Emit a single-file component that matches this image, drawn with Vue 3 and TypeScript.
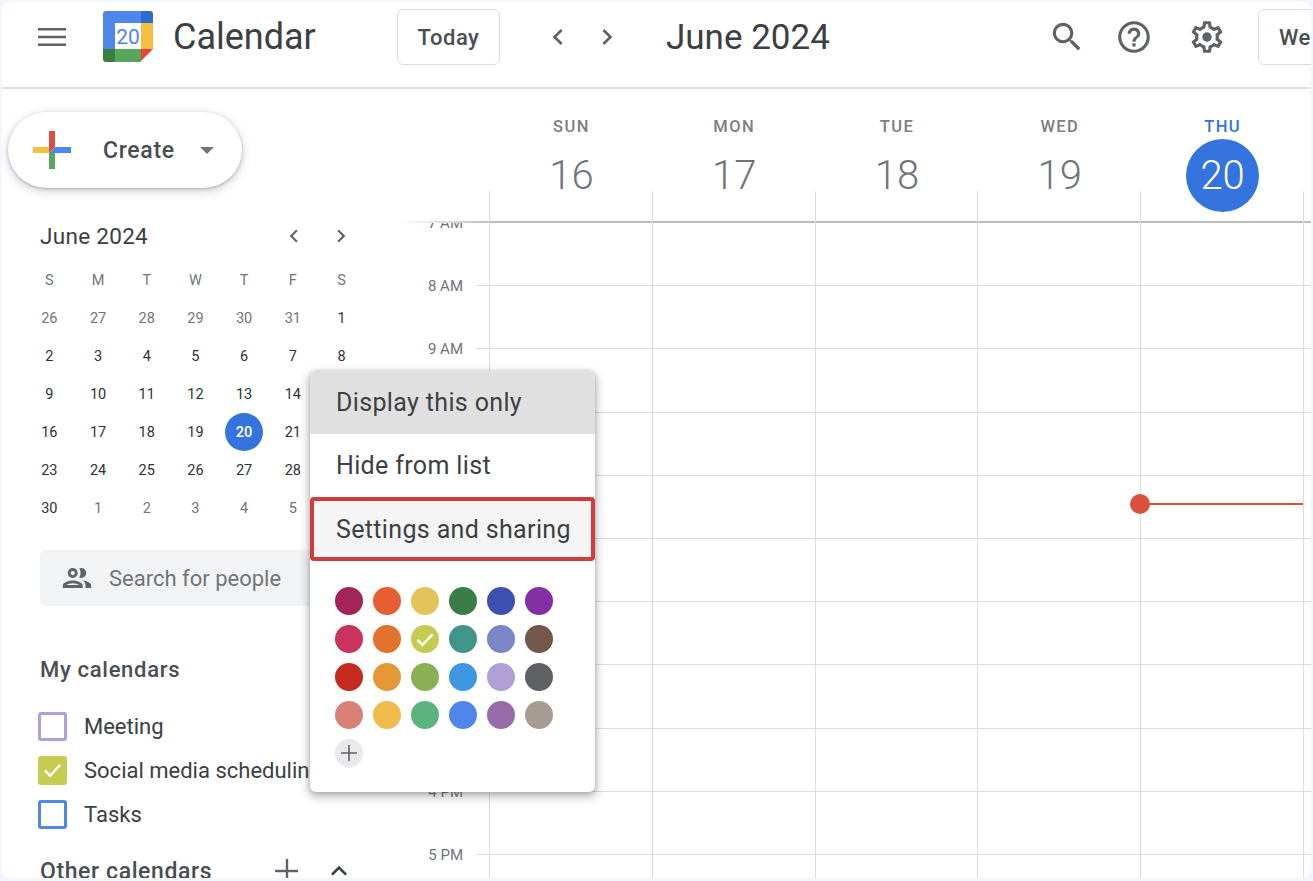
<script setup lang="ts">
const weekdays = ['S', 'M', 'T', 'W', 'T', 'F', 'S']

const miniDays: { n: number; muted?: boolean; today?: boolean }[] = [
  ...[26, 27, 28, 29, 30, 31].map((n) => ({ n, muted: true })),
  ...Array.from({ length: 30 }, (_, i) => ({ n: i + 1, today: i + 1 === 20 })),
  ...[1, 2, 3, 4, 5, 6].map((n) => ({ n, muted: true })),
]

const days = [
  { name: 'SUN', n: 16 },
  { name: 'MON', n: 17 },
  { name: 'TUE', n: 18 },
  { name: 'WED', n: 19 },
  { name: 'THU', n: 20, today: true },
]

const hours = ['7 AM', '8 AM', '9 AM', '10 AM', '11 AM', '12 PM', '1 PM', '2 PM', '3 PM', '4 PM', '5 PM']

const calendars = [
  { name: 'Meeting', color: '#b09fdb' },
  { name: 'Social media scheduling', color: '#c6cb52', checked: true },
  { name: 'Tasks', color: '#5085ea' },
]

const swatches = [
  '#a32558', '#e65f33', '#e3c45a', '#3a7d48', '#3f51b0', '#8430a5',
  '#c93360', '#e3722d', '#c6cb52', '#40958a', '#7b86c6', '#74574b',
  '#c42a1d', '#e59838', '#8ab055', '#3f97e0', '#b0a0d8', '#5e6063',
  '#da8278', '#f0bd4c', '#5cb37e', '#5085ea', '#976ca8', '#a69c91',
]
</script>

<template>
  <div class="frame">
    <div class="shell">
      <header class="topbar">
        <svg class="burger" width="28" height="18" viewBox="0 0 28 18">
          <path d="M0 0h28v2.6H0zM0 7.7h28v2.6H0zM0 15.4h28V18H0z" fill="#5f6368" />
        </svg>
        <svg class="logo" width="50" height="51" viewBox="0 0 50 51">
          <path d="M3 0h35v12H12v26H0V3a3 3 0 0 1 3-3z" fill="#4f86ec" />
          <path d="M38 0h9a3 3 0 0 1 3 3v9H38z" fill="#2f6bd0" />
          <path d="M38 12h12v26H38z" fill="#f6bf40" />
          <path d="M12 38h26v13H12z" fill="#58a55c" />
          <path d="M0 38h12v13H3a3 3 0 0 1-3-3z" fill="#3a7d3f" />
          <path d="M38 38h12L38 50z" fill="#ea4335" />
          <text x="25" y="33" text-anchor="middle" class="logo-num">20</text>
        </svg>
        <span class="brand">Calendar</span>
        <button type="button" class="today-btn">Today</button>
        <svg class="nav-prev" width="32" height="32" viewBox="0 0 24 24" fill="#5f6368"><path d="M15.41 7.41 14 6l-6 6 6 6 1.41-1.41L10.83 12z" /></svg>
        <svg class="nav-next" width="32" height="32" viewBox="0 0 24 24" fill="#5f6368"><path d="M10 6 8.59 7.41 13.17 12l-4.58 4.59L10 18l6-6z" /></svg>
        <span class="period">June 2024</span>
        <svg class="act-search" width="38" height="38" viewBox="0 0 24 24" fill="#5f6368"><path d="M15.5 14h-.79l-.28-.27A6.471 6.471 0 0 0 16 9.5 6.5 6.5 0 1 0 9.5 16c1.61 0 3.09-.59 4.23-1.57l.27.28v.79l5 4.99L20.49 19l-4.99-5zm-6 0C7.01 14 5 11.99 5 9.5S7.01 5 9.5 5 14 7.01 14 9.5 11.99 14 9.5 14z" /></svg>
        <svg class="act-help" width="38" height="38" viewBox="0 0 24 24" fill="#5f6368"><path d="M11 18h2v-2h-2v2zm1-16C6.48 2 2 6.48 2 12s4.48 10 10 10 10-4.48 10-10S17.52 2 12 2zm0 18c-4.41 0-8-3.59-8-8s3.59-8 8-8 8 3.59 8 8-3.59 8-8 8zm0-14c-2.21 0-4 1.79-4 4h2c0-1.1.9-2 2-2s2 .9 2 2c0 2-3 1.75-3 5h2c0-2.25 3-2.5 3-5 0-2.21-1.79-4-4-4z" /></svg>
        <svg class="act-gear" width="38" height="38" viewBox="0 0 24 24" fill="#5f6368"><path d="M19.43 12.98c.04-.32.07-.64.07-.98 0-.34-.03-.66-.07-.98l2.11-1.65c.19-.15.24-.42.12-.64l-2-3.46c-.09-.16-.26-.25-.44-.25-.06 0-.12.01-.17.03l-2.49 1c-.52-.4-1.08-.73-1.69-.98l-.38-2.65C14.46 2.18 14.25 2 14 2h-4c-.25 0-.46.18-.49.42l-.38 2.65c-.61.25-1.17.59-1.69.98l-2.49-1c-.06-.02-.12-.03-.18-.03-.17 0-.34.09-.43.25l-2 3.46c-.13.22-.07.49.12.64l2.11 1.65c-.04.32-.07.65-.07.98 0 .33.03.66.07.98l-2.11 1.65c-.19.15-.24.42-.12.64l2 3.46c.09.16.26.25.44.25.06 0 .12-.01.17-.03l2.49-1c.52.4 1.08.73 1.69.98l.38 2.65c.03.24.24.42.49.42h4c.25 0 .46-.18.49-.42l.38-2.65c.61-.25 1.17-.59 1.69-.98l2.49 1c.06.02.12.03.18.03.17 0 .34-.09.43-.25l2-3.46c.12-.22.07-.49-.12-.64l-2.11-1.65zm-1.98-1.71c.04.31.05.52.05.73 0 .21-.02.43-.05.73l-.14 1.13.89.7 1.08.84-.7 1.21-1.27-.51-1.04-.42-.9.68c-.43.32-.84.56-1.25.73l-1.06.43-.16 1.13-.2 1.35h-1.4l-.19-1.35-.16-1.13-1.06-.43c-.43-.18-.83-.41-1.23-.71l-.91-.7-1.06.43-1.27.51-.7-1.21 1.08-.84.89-.7-.14-1.13c-.03-.31-.05-.54-.05-.74s.02-.43.05-.73l.14-1.13-.89-.7-1.08-.84.7-1.21 1.27.51 1.04.42.9-.68c.43-.32.84-.56 1.25-.73l1.06-.43.16-1.13.2-1.35h1.39l.19 1.35.16 1.13 1.06.43c.43.18.83.41 1.23.71l.91.7 1.06-.43 1.27-.51.7 1.21-1.07.85-.89.7.14 1.13z" /><circle cx="12" cy="12" r="3" /></svg>
        <button type="button" class="view-btn">Week</button>
      </header>

      <div class="body">
        <aside class="sidebar">
          <button type="button" class="create">
            <svg width="38" height="38" viewBox="0 0 38 38">
              <path d="M16 0h6v16h-6z" fill="#dc4e41" />
              <path d="M0 16h16v6H0z" fill="#f6bf40" />
              <path d="M16 22h6v16h-6z" fill="#58a55c" />
              <path d="M22 16h16v6H22z" fill="#4f86ec" />
              <path d="M16 16h6l-6 6z" fill="#dc4e41" />
              <path d="M22 16v6h-6z" fill="#4f86ec" />
            </svg>
            <span class="create-label">Create</span>
            <svg width="14" height="7" viewBox="0 0 14 7"><path d="M0 0h14L7 7z" fill="#70757a" /></svg>
          </button>

          <div class="mini-head">
            <span class="mini-title">June 2024</span>
            <svg width="26" height="26" viewBox="0 0 24 24" fill="#5f6368"><path d="M15.41 7.41 14 6l-6 6 6 6 1.41-1.41L10.83 12z" /></svg>
            <svg width="26" height="26" viewBox="0 0 24 24" fill="#5f6368"><path d="M10 6 8.59 7.41 13.17 12l-4.58 4.59L10 18l6-6z" /></svg>
          </div>
          <div class="mini-grid">
            <span v-for="(d, i) in weekdays" :key="'w' + i" class="mini-cell weekday">{{ d }}</span>
            <span
              v-for="(d, i) in miniDays"
              :key="i"
              class="mini-cell"
              :class="{ muted: d.muted, today: d.today }"
            >{{ d.n }}</span>
          </div>

          <div class="people">
            <svg width="34" height="34" viewBox="0 0 24 24" fill="#5f6368"><path d="M9 13.75c-2.34 0-7 1.17-7 3.5V19h14v-1.75c0-2.33-4.66-3.5-7-3.5zM4.34 17c.84-.58 2.87-1.25 4.66-1.25s3.82.67 4.66 1.25H4.34zM9 12c1.93 0 3.5-1.57 3.5-3.5S10.93 5 9 5 5.5 6.57 5.5 8.5 7.07 12 9 12zm0-5c.83 0 1.5.67 1.5 1.5S9.83 10 9 10s-1.5-.67-1.5-1.5S8.17 7 9 7zm7.04 6.81c1.16.84 1.96 1.96 1.96 3.44V19h4v-1.75c0-2.02-3.5-3.17-5.96-3.44zM15 12c1.93 0 3.5-1.57 3.5-3.5S16.93 5 15 5c-.54 0-1.04.13-1.5.35.63.89 1 1.98 1 3.15s-.37 2.26-1 3.15c.46.22.96.35 1.5.35z" /></svg>
            <span>Search for people</span>
          </div>

          <div class="section-title my-cals">My calendars</div>
          <ul class="cal-list">
            <li v-for="c in calendars" :key="c.name" class="cal-item">
              <span
                class="checkbox"
                :style="{ borderColor: c.color, backgroundColor: c.checked ? c.color : 'transparent' }"
              >
                <svg v-if="c.checked" width="24" height="24" viewBox="0 0 24 24" fill="none" stroke="#fff" stroke-width="2.6"><path d="M4 12.5l5.5 5.5L20 6.5" /></svg>
              </span>
              <span class="cal-name">{{ c.name }}</span>
            </li>
          </ul>

          <div class="section-title other-cals">
            <span>Other calendars</span>
            <svg class="other-add" width="24" height="24" viewBox="0 0 24 24" fill="#5f6368"><path d="M1 10.8h10.8V0h2.4v10.8H25v2.4H14.2V24h-2.4V13.2H1z" /></svg>
            <svg class="other-toggle" width="32" height="32" viewBox="0 0 24 24" fill="#3c4043"><path d="M12 8l-6 6 1.41 1.41L12 10.83l4.59 4.58L18 14z" /></svg>
          </div>
        </aside>

        <main class="week">
          <div class="week-head">
            <div class="head-gutter"></div>
            <div v-for="d in days" :key="d.name" class="day" :class="{ current: d.today }">
              <span class="day-name">{{ d.name }}</span>
              <span class="day-num">{{ d.n }}</span>
            </div>
            <div class="day day-rest"></div>
          </div>
          <div class="week-grid">
            <div v-for="(h, r) in hours" :key="h" class="hour-row">
              <div class="hour-label"><span>{{ h }}</span></div>
              <div v-for="c in 5" :key="c" class="slot">
                <template v-if="r === 4 && c === 5">
                  <span class="now-line"></span>
                  <span class="now-dot"></span>
                </template>
              </div>
              <div class="slot"></div>
            </div>
          </div>
        </main>
      </div>

      <div class="menu">
        <div class="menu-item active">Display this only</div>
        <div class="menu-item">Hide from list</div>
        <div class="menu-item marked">Settings and sharing</div>
        <div class="swatches">
          <span v-for="(s, i) in swatches" :key="i" class="swatch" :style="{ backgroundColor: s }">
            <svg v-if="i === 8" width="20" height="20" viewBox="0 0 24 24" fill="none" stroke="#fff" stroke-width="2.8"><path d="M3 13l6 6L21 6.5" /></svg>
          </span>
          <span class="swatch swatch-add">
            <svg width="18" height="18" viewBox="0 0 18 18" fill="#5f6368"><path d="M8.2 1h1.6v7.2H17v1.6H9.8V17H8.2V9.8H1V8.2h7.2z" /></svg>
          </span>
        </div>
      </div>
    </div>
  </div>
</template>

<style>
html,
body {
  margin: 0;
  background: #f2f5fd;
}
</style>

<style scoped>
.frame {
  width: 1313px;
  height: 881px;
  box-sizing: border-box;
  padding: 2px 2px 3px;
  background: #f2f5fd;
  font-family: Roboto, "Liberation Sans", sans-serif;
  color: #3c4043;
}

.shell {
  position: relative;
  height: 100%;
  display: flex;
  flex-direction: column;
  overflow: hidden;
  background: #fff;
  border-radius: 8px;
}

button {
  font-family: inherit;
  color: inherit;
  cursor: pointer;
}

.topbar {
  flex: none;
  height: 87px;
  box-sizing: border-box;
  padding-bottom: 15px;
  display: flex;
  align-items: center;
  border-bottom: 2px solid #dfe1e5;
}

.topbar > * {
  flex: none;
}

.burger {
  margin-left: 36px;
}

.logo {
  margin: -1px 0 0 37px;
}

.logo-num {
  font: 400 21px Roboto, sans-serif;
  fill: #4f86ec;
}

.brand {
  margin-left: 20px;
  width: 224px;
  font-size: 36px;
  line-height: 1;
}

.today-btn {
  width: 103px;
  height: 56px;
  box-sizing: border-box;
  border: 1.5px solid #dadce0;
  border-radius: 6px;
  background: #fff;
  font-size: 22px;
  font-weight: 500;
  letter-spacing: 0.5px;
  color: #4a4e52;
}

.nav-prev {
  margin-left: 42px;
}

.nav-next {
  margin-left: 17px;
}

.period {
  margin-left: 43px;
  width: 382px;
  font-size: 35px;
}

.act-help {
  margin-left: 29px;
}

.act-gear {
  margin-left: 35px;
}

.view-btn {
  width: 120px;
  height: 56px;
  margin-left: 32px;
  box-sizing: border-box;
  border: 1.5px solid #dadce0;
  border-radius: 6px;
  background: #fff;
  font-size: 22px;
  font-weight: 500;
  letter-spacing: 0.5px;
  color: #4a4e52;
  text-align: left;
  padding-left: 20px;
}

.body {
  flex: 1;
  min-height: 0;
  display: flex;
}

.sidebar {
  flex: none;
  width: 398px;
  box-sizing: border-box;
  padding-top: 23px;
}

.create {
  width: 234px;
  height: 76px;
  margin-left: 6px;
  padding: 0 28px 0 25px;
  display: flex;
  align-items: center;
  border: none;
  border-radius: 38px;
  background: #fff;
  box-shadow: 0 1px 3px rgba(60, 64, 67, 0.35), 0 3px 8px 2px rgba(60, 64, 67, 0.16);
}

.create-label {
  flex: 1;
  padding-left: 32px;
  text-align: left;
  font-size: 23px;
  font-weight: 500;
  letter-spacing: 0.7px;
  color: #4a4e52;
}

.mini-head {
  height: 38px;
  margin: 29px 0 6px 38px;
  display: flex;
  align-items: center;
}

.mini-title {
  width: 241px;
  font-size: 22.5px;
  letter-spacing: 0.3px;
}

.mini-head svg + svg {
  margin-left: 21px;
}

.mini-grid {
  margin-left: 23px;
  display: grid;
  grid-template-columns: repeat(7, 48.7px);
  grid-auto-rows: 38px;
}

.mini-cell {
  width: 38px;
  height: 38px;
  justify-self: center;
  display: flex;
  align-items: center;
  justify-content: center;
  border-radius: 50%;
  font-size: 14.5px;
  color: #2f3236;
}

.weekday,
.muted {
  color: #70757a;
}

.today {
  background: #3573de;
  color: #fff;
  font-weight: 500;
}

.people {
  width: 300px;
  height: 56px;
  margin: 23px 0 0 38px;
  padding-left: 20px;
  box-sizing: border-box;
  display: flex;
  align-items: center;
  gap: 15px;
  border-radius: 5px;
  background: #f1f3f4;
  font-size: 22px;
  color: #70757a;
}

.section-title {
  height: 30px;
  display: flex;
  align-items: center;
  margin-left: 38px;
  font-size: 22px;
  letter-spacing: 0.7px;
  font-weight: 500;
  color: #4a4e52;
}

.my-cals {
  margin-top: 48px;
}

.cal-list {
  list-style: none;
  margin: 20px 0 0 36px;
  padding: 0;
}

.cal-item {
  height: 44px;
  display: flex;
  align-items: center;
  gap: 17px;
  white-space: nowrap;
}

.checkbox {
  width: 29px;
  height: 29px;
  flex: none;
  box-sizing: border-box;
  display: flex;
  align-items: center;
  justify-content: center;
  border: 3px solid;
  border-radius: 3px;
}

.cal-name {
  font-size: 22px;
}

.other-cals {
  margin-top: 20px;
  font-size: 23px;
  letter-spacing: 0.6px;
}

.other-add {
  margin-left: 62px;
}

.other-toggle {
  margin-left: 25px;
}

.week {
  flex: 1;
  min-width: 0;
  display: flex;
  flex-direction: column;
}

.week-head {
  flex: none;
  height: 134px;
  display: grid;
  grid-template-columns: 89px repeat(5, 162.8px) 8px;
  background: linear-gradient(to right, transparent, #bdbdbd 90px) left bottom / 100% 2px no-repeat;
}

.day {
  position: relative;
  display: flex;
  flex-direction: column;
  align-items: center;
  padding: 28px 0 0 2px;
}

.day::before {
  content: "";
  position: absolute;
  left: 0;
  bottom: 0;
  height: 32px;
  border-left: 1px solid #dadce0;
}

.day-name {
  font-size: 16.5px;
  font-weight: 500;
  line-height: 20px;
  letter-spacing: 1.4px;
  color: #7b8085;
}

.day-num {
  width: 73px;
  height: 73px;
  margin-top: 2px;
  display: flex;
  align-items: center;
  justify-content: center;
  border-radius: 50%;
  font-size: 40px;
  font-weight: 300;
  color: #70757a;
}

.current .day-name {
  color: #3573de;
}

.current .day-num {
  background: #3573de;
  color: #fff;
}

.week-grid {
  flex: 1;
  min-height: 0;
  overflow: hidden;
}

.hour-row {
  height: 63.2px;
  box-sizing: border-box;
  display: grid;
  grid-template-columns: 89px repeat(5, 162.8px) 8px;
}

.hour-label {
  height: 63.2px;
  box-sizing: border-box;
  padding-right: 26px;
  text-align: right;
  background: linear-gradient(#dadce0, #dadce0) right bottom / 13px 1px no-repeat;
}

.hour-label span {
  display: block;
  margin-top: -9px;
  line-height: 18px;
  font-size: 15px;
  color: #70757a;
}

.slot {
  position: relative;
  box-sizing: border-box;
  border-left: 1px solid #dadce0;
  border-bottom: 1px solid #dadce0;
}

.now-line {
  position: absolute;
  left: 0;
  right: 0;
  top: 27px;
  height: 2px;
  background: #d9503f;
}

.now-dot {
  position: absolute;
  left: -11px;
  top: 18px;
  width: 20px;
  height: 20px;
  border-radius: 50%;
  background: #d9503f;
}

.menu {
  position: absolute;
  left: 308px;
  top: 369px;
  width: 285px;
  height: 421px;
  overflow: hidden;
  border-radius: 6px;
  background: #fff;
  box-shadow: 0 4px 10px 2px rgba(60, 64, 67, 0.28), 0 1px 4px rgba(60, 64, 67, 0.3);
}

.menu-item {
  height: 63px;
  box-sizing: border-box;
  display: flex;
  align-items: center;
  padding-left: 26px;
  font-size: 25px;
  letter-spacing: 0.35px;
}

.active {
  background: #e0e0e0;
}

.marked {
  height: 64px;
  padding-left: 22px;
  border: 4px solid #d13d3d;
  border-radius: 4px;
  background: #f5f5f5;
}

.swatches {
  margin: 26px 0 0 25px;
  display: grid;
  grid-template-columns: repeat(6, 28px);
  grid-auto-rows: 28px;
  gap: 10px;
}

.swatch {
  display: flex;
  align-items: center;
  justify-content: center;
  border-radius: 50%;
}

.swatch-add {
  background: #e8eaed;
}
</style>
